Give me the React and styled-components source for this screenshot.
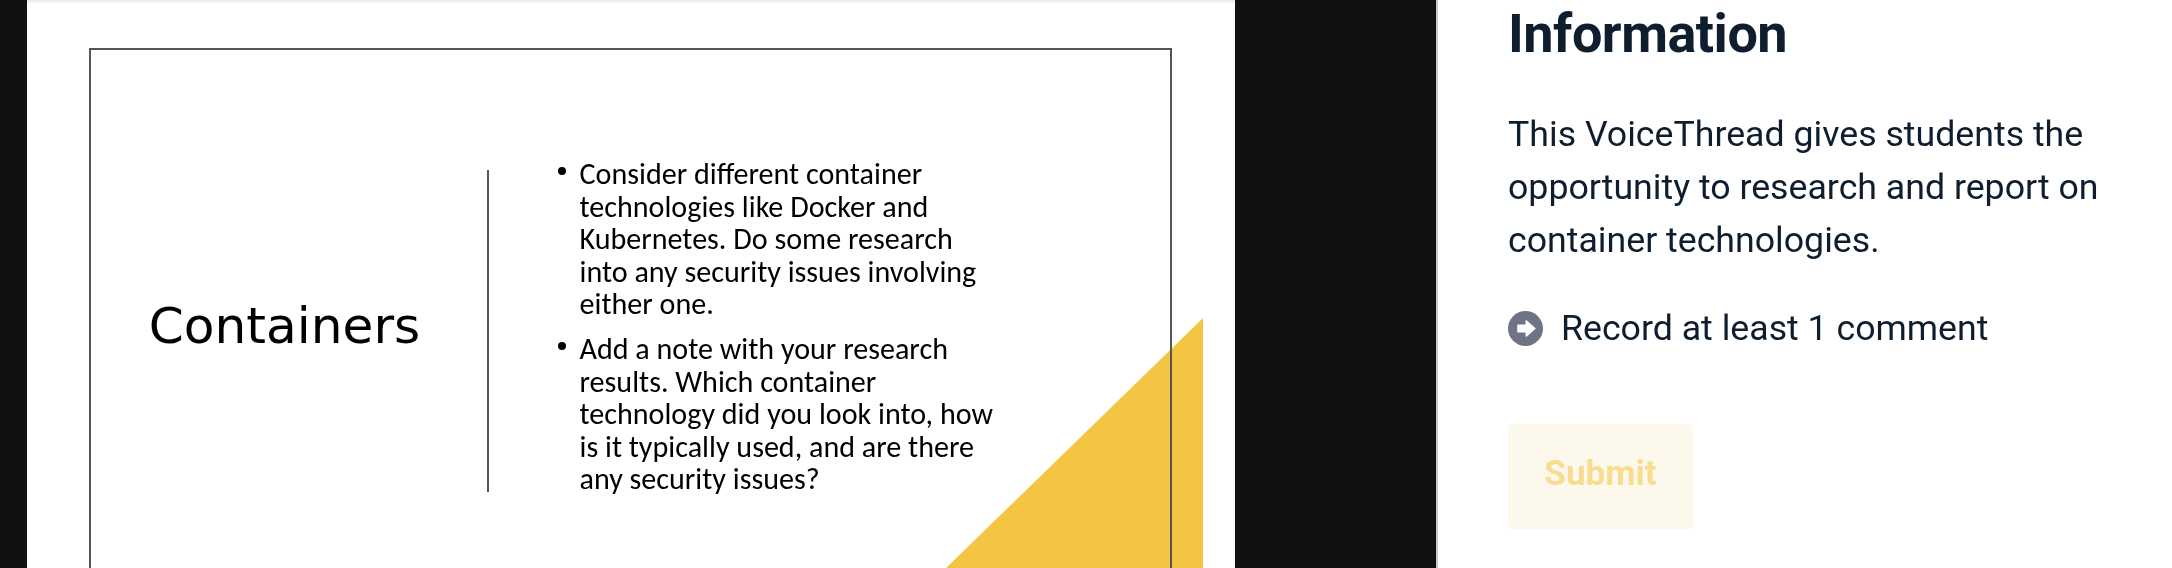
import React from "react";
import styled, { createGlobalStyle, css } from "styled-components";

const Global = createGlobalStyle`
  html, body { margin: 0; padding: 0; background: #fff; }
  #root { width: 2172px; height: 568px; overflow: hidden; }
`;

const soft = css`
  filter: blur(0.35px);
`;

const Page = styled.div`
  display: flex;
  width: 2172px;
  height: 568px;
  overflow: hidden;
  background: #111113;
`;

const Stage = styled.main`
  flex: 0 0 1436px;
  padding-left: 27px;
  box-sizing: border-box;
  background: #111113;
`;

const Slide = styled.section`
  position: relative;
  width: 1208px;
  height: 568px;
  box-sizing: border-box;
  padding: 48px 0 0 62px;
  overflow: hidden;
  background: #fff;

  &::before {
    content: "";
    position: absolute;
    inset: 0 0 auto 0;
    height: 4px;
    background: linear-gradient(#e9e9e9, #fff);
  }
`;

const Corner = styled.svg`
  position: absolute;
  left: 919px;
  top: 318px;
  display: block;
`;

const Frame = styled.div`
  ${soft}
  position: relative;
  display: flex;
  align-items: flex-start;
  width: 1083px;
  height: 800px;
  box-sizing: border-box;
  padding-top: 120px;
  border: 2px solid #555;
`;

const TitleCell = styled.div`
  display: flex;
  align-items: center;
  justify-content: center;
  flex: 0 0 396px;
  height: 312px;
  padding-right: 9px;
  box-sizing: border-box;
`;

const SlideTitle = styled.h1`
  margin: 0;
  font: 400 50.2px/1 "DejaVu Sans", sans-serif;
  color: #000;
  white-space: nowrap;
`;

const Points = styled.ul`
  display: flex;
  flex-direction: column;
  gap: 12px;
  flex: none;
  margin: -12px 0 0;
  padding: 0 0 0 68.5px;
  list-style: none;
`;

const Rule = styled.div`
  flex: none;
  width: 2px;
  height: 322px;
  background: #555;
`;

const Point = styled.li`
  display: flex;
  gap: 14px;
  font: 400 30.1px/32.6px Carlito, "Lato", sans-serif;
  color: #000;
  white-space: nowrap;

  &::before {
    content: "";
    flex: none;
    width: 8px;
    height: 8px;
    margin-top: 9px;
    border-radius: 50%;
    background: #000;
  }
`;

const Side = styled.aside`
  flex: 1;
  box-sizing: border-box;
  padding: 0 0 0 70px;
  background: #fff;
  border-left: 2px solid #c9cacc;
  color: #0e1e2f;
  font-family: Roboto, sans-serif;
`;

const Heading = styled.h2`
  ${soft}
  margin: 4px 0 0;
  font-size: 54px;
  font-weight: 700;
  line-height: 60px;
  letter-spacing: -0.5px;
`;

const Description = styled.p`
  ${soft}
  margin: 44px 0 0;
  font-size: 35.7px;
  line-height: 53px;
`;

const Requirement = styled.div`
  ${soft}
  display: flex;
  align-items: center;
  gap: 18px;
  margin-top: 35px;
  font-size: 35.7px;
  line-height: 53px;
  color: #0e1e2f;
`;

const ArrowIcon = styled.svg`
  flex: none;
  display: block;
  width: 35px;
  height: 35px;
`;

const SubmitButton = styled.button`
  ${soft}
  display: block;
  width: 185px;
  height: 105px;
  margin-top: 69px;
  padding: 0 0 7px;
  border: 0;
  border-radius: 5px;
  background: #fcf8ec;
  color: #f8dc90;
  font: 700 35px Roboto, sans-serif;
`;

export default function App() {
  return (
    <Page>
      <Global />
      <Stage>
        <Slide>
          <Frame>
            <TitleCell>
              <SlideTitle>Containers</SlideTitle>
            </TitleCell>
            <Rule />
            <Points>
              <Point>
                <span>
                  Consider different container<br />
                  technologies like Docker and<br />
                  Kubernetes. Do some research<br />
                  into any security issues involving<br />
                  either one.
                </span>
              </Point>
              <Point>
                <span>
                  Add a note with your research<br />
                  results. Which container<br />
                  technology did you look into, how<br />
                  is it typically used, and are there<br />
                  any security issues?
                </span>
              </Point>
            </Points>
          </Frame>
          <Corner width="257" height="250" viewBox="0 0 257 250">
            <polygon points="257,0 257,250 0,250" fill="#f4c443" />
            <rect x="224" y="0" width="2" height="250" fill="#555" />
          </Corner>
        </Slide>
      </Stage>
      <Side>
        <Heading>Information</Heading>
        <Description>
          This VoiceThread gives students the<br />
          opportunity to research and report on<br />
          container technologies.
        </Description>
        <Requirement>
          <ArrowIcon viewBox="0 0 35 35">
            <circle cx="17.5" cy="17.5" r="17.5" fill="#6f7484" />
            <path
              d="M10 14.2h8.3V10L26.8 17.5l-8.5 7.5v-4.2H10z"
              fill="#fff"
              stroke="#fff"
              strokeWidth="1.6"
              strokeLinejoin="round"
            />
          </ArrowIcon>
          Record at least 1 comment
        </Requirement>
        <SubmitButton>Submit</SubmitButton>
      </Side>
    </Page>
  );
}
